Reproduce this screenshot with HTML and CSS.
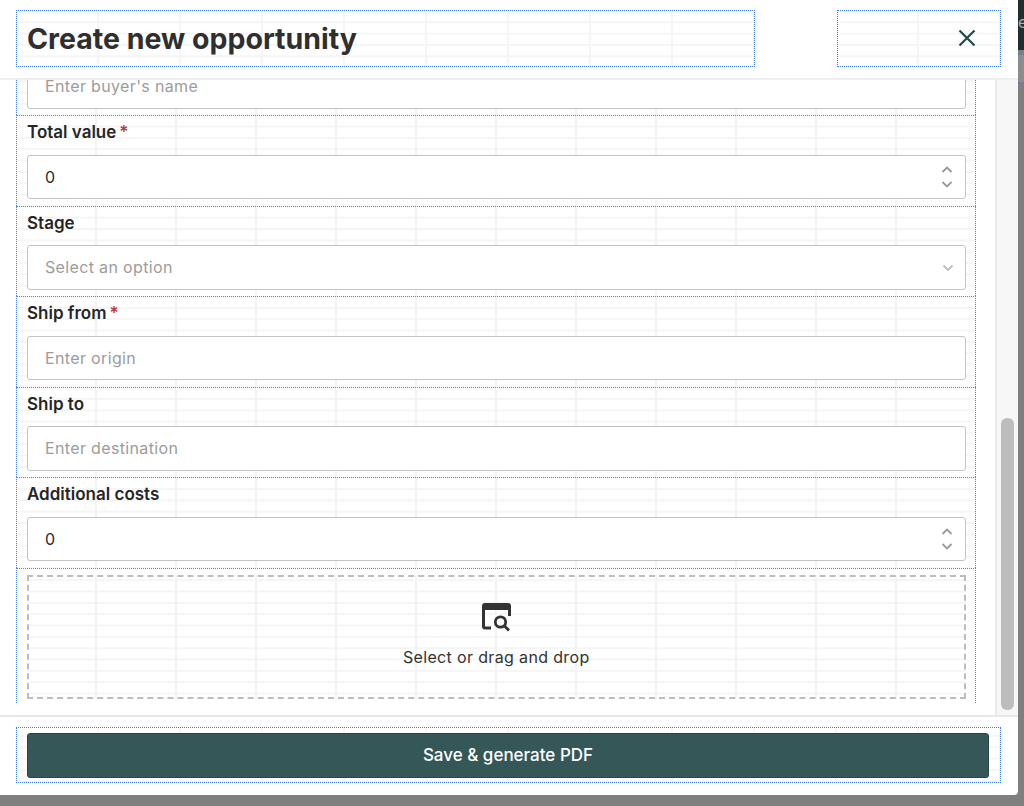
FILE: index.html
```html
<!DOCTYPE html>
<html lang="en">
<head>
<meta charset="utf-8">
<title>Create new opportunity</title>
<link rel="stylesheet" href="styles.css">
</head>
<body>
<div class="page">
  <div class="modal">
    <header class="modal-header">
      <div class="title-box sheet-a"><h1 class="title">Create new opportunity</h1></div>
      <div class="close-box sheet-a">
        <svg class="close-icon" viewBox="0 0 18 18" width="18" height="18" aria-label="Close"><path d="M1.5 1.5 16.5 16.5M16.5 1.5 1.5 16.5"/></svg>
      </div>
    </header>
    <div class="modal-body">
      <form class="form-pane">
        <div class="field field-clipped sheet-b">
          <div class="control"><input class="input" type="text" placeholder="Enter buyer's name"></div>
        </div>
        <div class="field sheet-b">
          <label class="label">Total value<span class="req">*</span></label>
          <div class="control">
            <input class="input" type="text" value="0">
            <svg class="spin" viewBox="0 0 12 22" width="12" height="22"><path d="M1.5 6 6 1.5 10.5 6M1.5 16 6 20.5 10.5 16"/></svg>
          </div>
        </div>
        <div class="field sheet-b">
          <label class="label">Stage</label>
          <div class="control">
            <input class="input" type="text" placeholder="Select an option">
            <svg class="caret" viewBox="0 0 12 8" width="12" height="8"><path d="M1.5 1.5 6 6 10.5 1.5"/></svg>
          </div>
        </div>
        <div class="field sheet-b">
          <label class="label">Ship from<span class="req">*</span></label>
          <div class="control"><input class="input" type="text" placeholder="Enter origin"></div>
        </div>
        <div class="field sheet-b">
          <label class="label">Ship to</label>
          <div class="control"><input class="input" type="text" placeholder="Enter destination"></div>
        </div>
        <div class="field sheet-b">
          <label class="label">Additional costs</label>
          <div class="control">
            <input class="input" type="text" value="0">
            <svg class="spin" viewBox="0 0 12 22" width="12" height="22"><path d="M1.5 6 6 1.5 10.5 6M1.5 16 6 20.5 10.5 16"/></svg>
          </div>
        </div>
        <div class="upload-section">
          <div class="dropzone sheet-b">
            <svg class="file-icon" viewBox="0 0 29 29" width="29" height="29">
              <path class="file-fill" d="M3 0H26a3 3 0 0 1 3 3V13H26V7H3V23.5H9V26.5H3a3 3 0 0 1-3-3V3a3 3 0 0 1 3-3Z"/>
              <circle class="file-line" cx="18.5" cy="19" r="5.2"/>
              <path class="file-line" d="M22.5 23 27 27.5"/>
            </svg>
            <span class="drop-text">Select or drag and drop</span>
          </div>
        </div>
      </form>
      <div class="scroll-track"><div class="scroll-thumb"></div></div>
    </div>
    <footer class="modal-footer">
      <div class="footer-box sheet-a"><button class="save" type="button">Save &amp; generate PDF</button></div>
    </footer>
  </div>
  <div class="backdrop">
    <div class="backdrop-dark">e</div>
    <div class="backdrop-band"></div>
  </div>
</div>
</body>
</html>
```

FILE: styles.css
```css
* { box-sizing: border-box; }
html, body { margin: 0; height: 100%; }
body {
  background: #7f7f7f;
  font-family: "Inter", "Liberation Sans", sans-serif;
  color: #2b2b2b;
  overflow: hidden;
}
.page { display: flex; height: 806px; width: 1024px; align-items: flex-start; }

.sheet-a {
  background-color: #fff;
  background-image:
    linear-gradient(to right, #f5f5f5 2px, transparent 2px),
    linear-gradient(to bottom, #f5f5f5 2px, transparent 2px);
  background-size: 82px 100%, 100% 11.33px;
  background-position: 15px 0, 0 10px;
  background-attachment: fixed;
}
.sheet-b {
  background-color: #fff;
  background-image:
    linear-gradient(to right, #f3f3f3 2px, transparent 2px),
    linear-gradient(to bottom, #f5f5f5 2px, transparent 2px);
  background-size: 80px 100%, 100% 11.33px;
  background-position: 15px 0, 0 1px;
  background-attachment: fixed;
}

.modal {
  width: 1018px;
  height: 795px;
  flex: none;
  background: #fff;
  border-radius: 0 0 4px 0;
  display: flex;
  flex-direction: column;
  overflow: hidden;
}
.modal-header {
  height: 80px;
  flex: none;
  padding: 10px 17px 12px 16px;
  display: flex;
  justify-content: space-between;
  border-bottom: 2px solid #eeeeee;
}
.title-box, .close-box, .footer-box { border: 1px dotted #3f7ff5; }
.title-box {
  width: 739px;
  height: 57px;
  padding-left: 10px;
  display: flex;
  align-items: center;
}
.title { margin: 0; font-size: 28.5px; line-height: 36px; font-weight: 700; color: #2f2f2f; }
.close-box {
  width: 164px;
  height: 57px;
  padding: 0 24px 2px 0;
  display: flex;
  align-items: center;
  justify-content: flex-end;
}
.close-icon { fill: none; stroke: #1f4a4d; stroke-width: 2.2; }

.modal-body { flex: 1; min-height: 0; display: flex; }
.form-pane {
  width: 995px;
  flex: none;
  padding: 0 19px 12px 16px;
  display: flex;
  flex-direction: column;
  justify-content: flex-end;
  overflow: hidden;
}
.field {
  height: 90.5px;
  flex: none;
  padding: 4px 9.5px 0 10px;
  border-top: 1px dotted #4a86ff;
  border-left: 1px dotted #4a86ff;
  border-right: 1px dotted #4a86ff;
}
.field-clipped { height: 51px; padding-top: 0; border-top: 0; }
.label { display: block; font-size: 17px; line-height: 24px; font-weight: 600; color: #262626; margin-bottom: 10.5px; }
.req { color: #c23b3b; margin-left: 3px; }
.control { position: relative; }
.input {
  display: block;
  width: 100%;
  height: 44.5px;
  padding: 0 17px;
  font: 400 16px "Inter", "Liberation Sans", sans-serif;
  letter-spacing: 0.35px;
  color: #2b2b2b;
  background: #fff;
  border: 1px solid #c4c4c4;
  border-radius: 3px;
  outline: none;
}
.input::placeholder { color: #9c9c9c; opacity: 1; }
.spin, .caret { position: absolute; fill: none; stroke-width: 1.8; }
.spin { right: 13px; top: 11px; stroke: #9a9a9a; }
.caret { right: 12px; top: 19px; stroke: #bdbdbd; }

.upload-section {
  height: 135.5px;
  flex: none;
  padding: 6px 9.5px 5px 10px;
  background: #fff;
  border-top: 1px dotted #4a86ff;
  border-left: 1px dotted #4a86ff;
  border-right: 1px dotted #4a86ff;
}
.dropzone {
  height: 124px;
  border: 2px dashed #bdbdbd;
  display: flex;
  flex-direction: column;
  align-items: center;
  padding-top: 26px;
  gap: 13px;
}
.file-fill { fill: #333; }
.file-line { fill: none; stroke: #333; stroke-width: 2.8; }
.drop-text { font-size: 16px; line-height: 24px; letter-spacing: 0.35px; color: #333; }

.scroll-track {
  flex: 1;
  border-left: 2px solid #ececec;
  background: #f7f7f7;
  padding: 0 4px 5px 4px;
  display: flex;
  flex-direction: column;
  justify-content: flex-end;
}
.scroll-thumb { height: 292px; background: #bdbdbd; border-radius: 6px; }

.modal-footer {
  height: 80px;
  flex: none;
  padding: 10px 17px 12px 16px;
  border-top: 2px solid #e8e8e8;
}
.footer-box { height: 56px; padding: 5px 11px 4px 10px; }
.save {
  display: block;
  width: 100%;
  height: 45px;
  padding: 0 0 2px;
  font: 500 17px "Inter", "Liberation Sans", sans-serif;
  color: #fff;
  background: #355758;
  border: 1px solid #234649;
  border-radius: 3px;
}

.backdrop { flex: 1; height: 806px; overflow: hidden; }
.backdrop-dark {
  height: 50px;
  background: #1f2f30;
  color: #a8b0b0;
  font-size: 16px;
  line-height: 44px;
}
.backdrop-band {
  height: 29px;
  margin-top: 4px;
  background: #8c8c8c;
  border-top: 1px dotted #4d72c8;
  border-bottom: 1px dotted #4d72c8;
}
```
